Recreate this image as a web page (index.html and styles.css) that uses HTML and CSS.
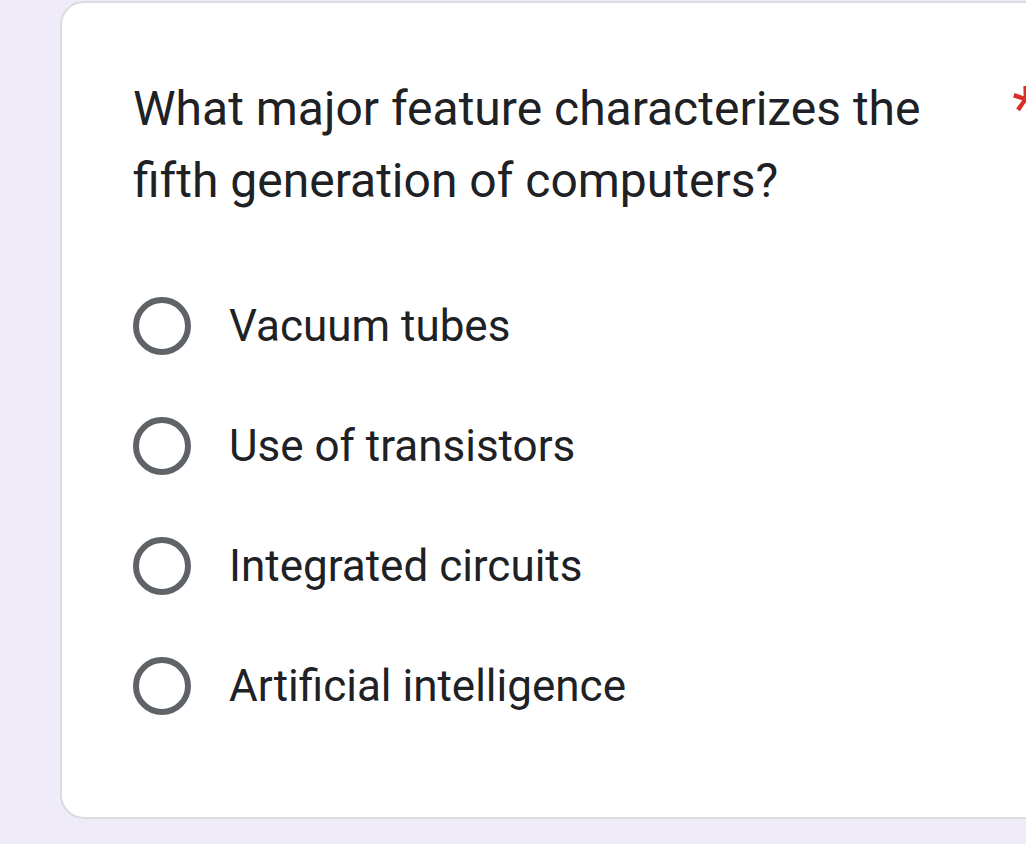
FILE: index.html
```html
<!DOCTYPE html>
<html lang="en">
<head>
    <meta charset="UTF-8">
    <meta name="viewport" content="width=device-width, initial-scale=1.0">
    <title>Question</title>
    <link rel="stylesheet" href="styles.css">
</head>
<body>
    <div class="card">
        <div class="question">
            <div class="question-text">What major feature characterizes the fifth generation of computers?</div>
            <span class="required">*</span>
        </div>

        <div class="options">
            <label class="option">
                <span class="radio"></span>
                <span class="option-label">Vacuum tubes</span>
            </label>
            <label class="option">
                <span class="radio"></span>
                <span class="option-label">Use of transistors</span>
            </label>
            <label class="option">
                <span class="radio"></span>
                <span class="option-label">Integrated circuits</span>
            </label>
            <label class="option">
                <span class="radio"></span>
                <span class="option-label">Artificial intelligence</span>
            </label>
        </div>
    </div>
</body>
</html>
```

FILE: styles.css
```css
body {
    font-family: Roboto, "Noto Sans", sans-serif;
    color: #202124;
    background-color: #f0ebf8;
    margin: 0;
    padding: 1px 0 0 60px;
    overflow: hidden;
}
.card {
    width: 1000px;
    background-color: #fff;
    border: 2px solid #dadce0;
    border-radius: 24px;
    padding: 70px 0 70px 71px;
    box-sizing: border-box;
    height: 818px;
}
.question {
    display: flex;
    justify-content: space-between;
    align-items: flex-start;
}
.question-text {
    font-size: 48px;
    line-height: 72px;
    width: 800px;
}
.required {
    color: #d93025;
    font-size: 62px;
    line-height: 72px;
    margin-right: 19px;
}
.options {
    margin-top: 49px;
}
.option {
    display: flex;
    align-items: center;
    height: 120px;
    gap: 38px;
}
.radio {
    width: 58px;
    height: 58px;
    border: 6px solid #5f6368;
    border-radius: 50%;
    box-sizing: border-box;
    flex-shrink: 0;
}
.option-label {
    font-size: 44px;
}
```
